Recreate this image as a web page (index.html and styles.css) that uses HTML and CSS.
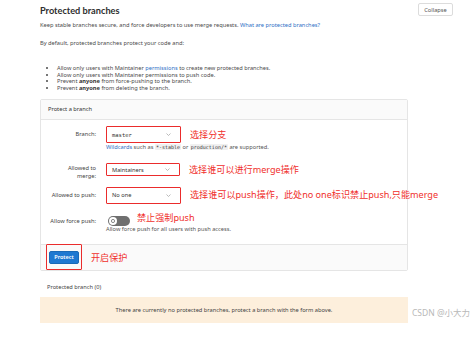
FILE: index.html
```html
<!DOCTYPE html>
<html>
<head>
<meta charset="utf-8">
<link rel="stylesheet" href="styles.css">
</head>
<body>
<div class="page">
  <div class="top">
    <h2 class="title">Protected branches</h2>
    <button class="collapse">Collapse</button>
  </div>
  <div class="content">
    <p class="desc">Keep stable branches secure, and force developers to use merge requests. <a class="link">What are protected branches?</a></p>
    <p class="intro">By default, protected branches protect your code and:</p>
    <ul class="rules">
      <li>Allow only users with Maintainer <a class="link">permissions</a> to create new protected branches.</li>
      <li>Allow only users with Maintainer permissions to push code.</li>
      <li>Prevent <b>anyone</b> from force-pushing to the branch.</li>
      <li>Prevent <b>anyone</b> from deleting the branch.</li>
    </ul>

    <div class="panel">
      <div class="panel-head">Protect a branch</div>
      <div class="panel-body">
        <div class="row row-branch">
          <div class="label">Branch:</div>
          <div class="field">
            <div class="line">
              <div class="mark mark-tall">
                <div class="select"><span class="mono">master</span><svg class="caret" width="5" height="3" viewBox="0 0 5 3"><path d="M0.5 0.5 L2.5 2.5 L4.5 0.5" fill="none" stroke="#aaa" stroke-width="0.8"/></svg></div>
              </div>
              <span class="note">选择分支</span>
            </div>
            <div class="help"><a class="link">Wildcards</a> such as <code>*-stable</code> or <code>production/*</code> are supported.</div>
          </div>
        </div>

        <div class="row row-merge">
          <div class="label">Allowed to<br>merge:</div>
          <div class="field">
            <div class="line">
              <div class="mark mark-short">
                <div class="select"><span>Maintainers</span><svg class="caret" width="5" height="3" viewBox="0 0 5 3"><path d="M0.5 0.5 L2.5 2.5 L4.5 0.5" fill="none" stroke="#aaa" stroke-width="0.8"/></svg></div>
              </div>
              <span class="note">选择谁可以进行merge操作</span>
            </div>
          </div>
        </div>

        <div class="row row-push">
          <div class="label">Allowed to push:</div>
          <div class="field">
            <div class="line">
              <div class="mark mark-tall">
                <div class="select"><span>No one</span><svg class="caret" width="5" height="3" viewBox="0 0 5 3"><path d="M0.5 0.5 L2.5 2.5 L4.5 0.5" fill="none" stroke="#aaa" stroke-width="0.8"/></svg></div>
              </div>
              <span class="note">选择谁可以push操作，此处no one标识禁止push,只能merge</span>
            </div>
          </div>
        </div>

        <div class="row row-force">
          <div class="label">Allow force push:</div>
          <div class="field">
            <div class="line line-force">
              <svg class="toggle" width="22" height="10" viewBox="0 0 22 10"><rect x="0" y="0" width="22" height="10" rx="5" fill="#6f6f6f"/><circle cx="5" cy="5" r="4" fill="#fff"/><circle cx="5" cy="5" r="1.6" fill="none" stroke="#6f6f6f" stroke-width="0.8"/></svg>
              <span class="note note-force">禁止强制push</span>
            </div>
            <div class="help help-force">Allow force push for all users with push access.</div>
          </div>
        </div>
      </div>
      <div class="panel-foot">
        <div class="mark mark-btn"><button class="protect">Protect</button></div>
        <span class="note">开启保护</span>
      </div>
    </div>

    <div class="list-title">Protected branch (0)</div>
    <div class="warning">There are currently no protected branches, protect a branch with the form above.</div>
  </div>
  <div class="watermark">CSDN @小大力</div>
</div>
</body>
</html>
```

FILE: styles.css
```css
* { box-sizing: border-box; }
html, body { margin: 0; padding: 0; background: #fff; }
body {
  font-family: "Noto Sans", "Open Sans", "Noto Sans CJK SC", sans-serif;
  font-size: 5.7px;
  color: #4a4a4a;
  width: 474px;
  height: 338px;
  overflow: hidden;
}
.page { position: relative; padding-left: 40px; }
.top {
  display: flex;
  justify-content: space-between;
  align-items: flex-start;
  width: 413px;
  height: 22px;
  padding-top: 3px;
}
.title {
  margin: 1px 0 0 0;
  font-family: Lato, "Noto Sans", sans-serif;
  font-size: 9.2px;
  font-weight: 700;
  color: #2e2e2e;
  line-height: 14px;
}
.collapse {
  width: 35px;
  height: 13px;
  padding: 0;
  border: 1px solid #dcdcdc;
  border-radius: 2px;
  background: #fff;
  font-family: inherit;
  font-size: 5.7px;
  color: #555;
}
.content { width: 368px; }
.link { color: #2f6fc6; }
.desc { margin: 0; line-height: 7px; }
.intro { margin: 11px 0 0 0; line-height: 7px; }
.rules {
  margin: 18px 0 0 0;
  padding-left: 17px;
  line-height: 6.5px;
}
.rules li { height: 6.5px; }
.rules b { color: #333; }

.panel {
  margin-top: 8px;
  border: 1px solid #e5e5e5;
  border-radius: 2px;
}
.panel-head {
  height: 20px;
  line-height: 19px;
  padding-left: 7px;
  background: #fafafa;
  border-bottom: 1px solid #e5e5e5;
  color: #333;
}
.panel-body { padding: 6px 0 0 0; height: 124px; }
.row {
  display: grid;
  grid-template-columns: 55px 1fr;
  column-gap: 10px;
}
.label { text-align: right; color: #444; }
.line { display: flex; align-items: center; }
.mark {
  border: 1.5px solid #ea2c2c;
  border-radius: 1px;
  padding: 1px;
}
.mark-tall { width: 75px; height: 17px; }
.mark-short { width: 74px; height: 13px; }
.select {
  display: flex;
  align-items: center;
  justify-content: space-between;
  height: 100%;
  padding: 0 8px 0 4px;
  background: #fff;
  color: #333;
}
.mono, code { font-family: "DejaVu Sans Mono", "Liberation Mono", monospace; }
.mono { font-size: 5.5px; }
code {
  font-size: 5px;
  background: #f0f0f0;
  color: #333;
  padding: 0 1px;
  border-radius: 1px;
}
.note {
  margin-left: 9px;
  color: #f0302c;
  font-family: "Noto Sans", "Noto Sans CJK SC", sans-serif;
  font-size: 9.1px;
  line-height: 12px;
  white-space: nowrap;
}
.row-branch .label { line-height: 17px; }
.help { line-height: 8px; color: #555; }
.row-merge { margin-top: 12px; }
.row-merge .label { line-height: 8.4px; margin-top: 1px; }
.row-push { margin-top: 6px; }
.row-push .label { line-height: 17px; }
.row-force { margin-top: 12px; }
.row-force .label { line-height: 10px; }
.line-force { height: 10px; align-items: flex-start; }
.toggle { display: block; margin-left: 2px; }
.note-force { margin-left: 7px; margin-top: -3px; line-height: 10px; }
.help-force { margin-top: 0; line-height: 7px; }

.panel-foot {
  display: flex;
  align-items: center;
  height: 26px;
  padding-left: 5px;
  background: #fafafa;
  border-top: 1px solid #e5e5e5;
}
.mark-btn { width: 36px; height: 26px; padding: 0; display: flex; align-items: center; justify-content: center; margin-top: -1px; }
.protect {
  width: 30px;
  height: 13px;
  padding: 0;
  border: 1px solid #1b69b6;
  border-radius: 2px;
  background: #1f78d1;
  color: #fff;
  font-family: inherit;
  font-size: 5.5px;
  font-weight: 600;
}
.list-title {
  margin-top: 12px;
  padding-left: 7px;
  line-height: 8px;
  color: #444;
}
.warning {
  margin-top: 6px;
  height: 26px;
  line-height: 26px;
  background: #fdefdc;
  text-align: center;
  color: #444;
}
.watermark {
  position: absolute;
  left: 412px;
  top: 306px;
  font-size: 8.5px;
  color: #b8b8b8;
  font-family: "Noto Sans", "Noto Sans CJK SC", sans-serif;
  white-space: nowrap;
}
```
